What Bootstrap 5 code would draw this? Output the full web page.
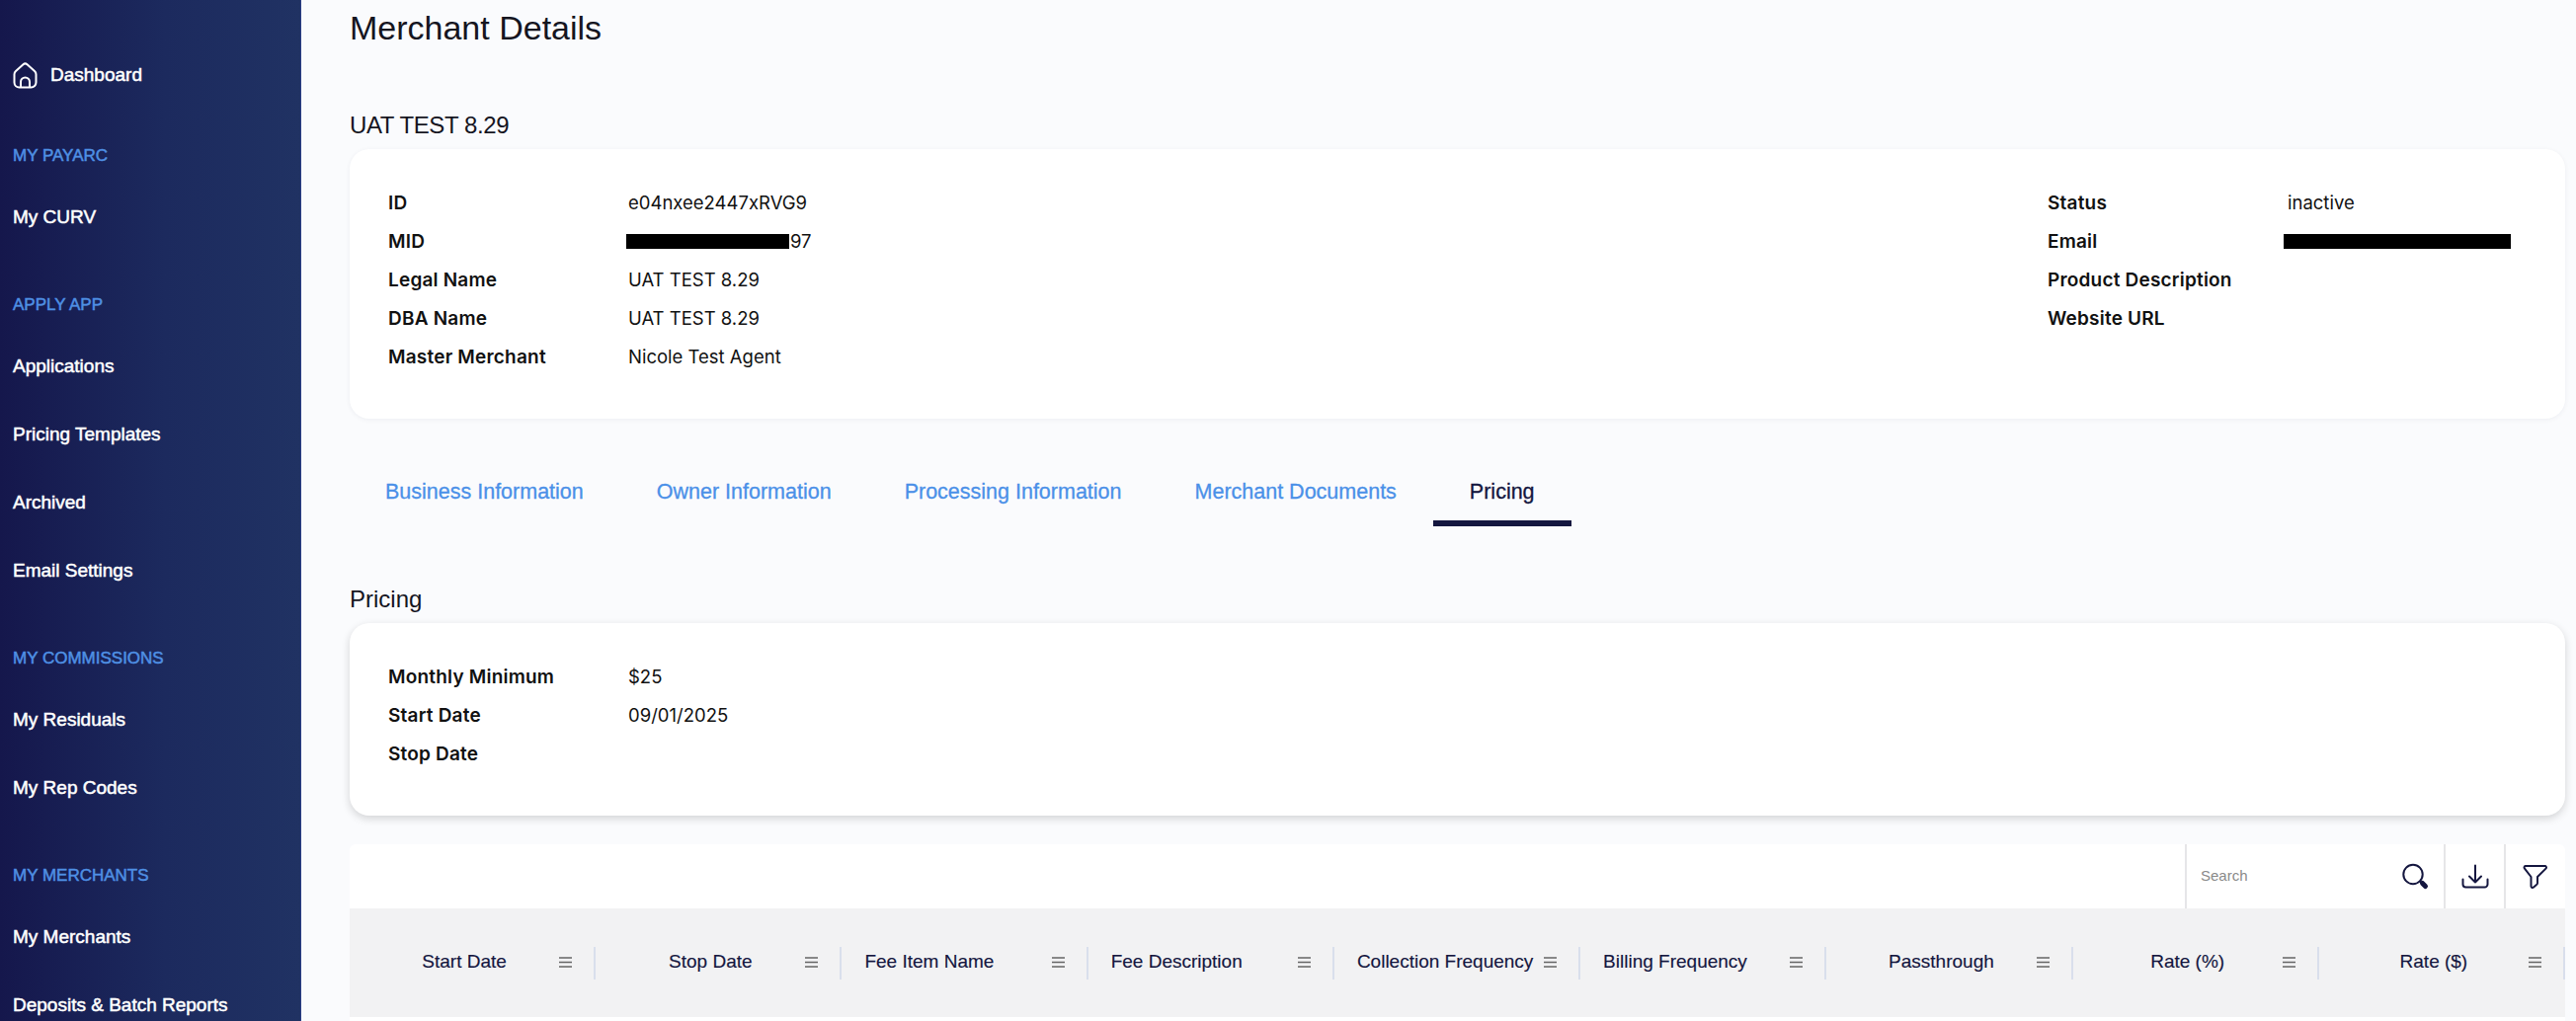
<!DOCTYPE html>
<html lang="en">
<head>
  <meta charset="UTF-8" />
  <title>Merchant Details</title>
  <link href="https://cdn.jsdelivr.net/npm/bootstrap@5.3.2/dist/css/bootstrap.min.css" rel="stylesheet" />
  <script src="https://cdn.jsdelivr.net/npm/bootstrap@5.3.2/dist/js/bootstrap.bundle.min.js" defer></script>
  <style>
    html, body { height: 1034px; overflow: hidden; }
    body { background: #fafbfd; font-family: "Liberation Sans", Arial, sans-serif; color: #14163f; }
    .page-wrap { height: 1034px; overflow: hidden; }

    /* sidebar */
    .side-bar { width: 305px; flex: none; background: linear-gradient(90deg, #15174c 0%, #1c2a5e 55%, #203263 100%); border-right: 1px solid #2b3f86; padding: 62px 13px 0; }
    .side-link { display: flex; align-items: center; gap: 13px; height: 28px; margin-bottom: 41px; color: #fff; font-size: 19px; -webkit-text-stroke: .5px currentColor; text-decoration: none; white-space: nowrap; }
    .side-head { height: 28px; line-height: 28px; margin-top: 61px; margin-bottom: 34px; color: #4f90e4; font-size: 17px; -webkit-text-stroke: .5px currentColor; white-space: nowrap; }
    .side-head.first-head { margin-top: 54px; }

    /* main column */
    .main-col { padding: 0 11px 0 49px; min-width: 0; }
    .page-title { font-size: 34px; line-height: 40px; font-weight: 400; margin: 8px 0 0; color: #15151f; }
    .sect-title { font-size: 24px; line-height: 30px; font-weight: 400; color: #15151f; }
    .sect-merchant { margin: 64px 0 9px; letter-spacing: -.4px; }
    .sect-pricing { margin: 59px 0 9px; }
    .info-card { background: #fff; border-radius: 20px; box-shadow: 0 1px 5px rgba(20, 30, 60, .06); padding: 35px 39px 43px; font-family: Inter, "Liberation Sans", sans-serif; font-size: 18.500px; color: #111; }
    .info-card.raised { box-shadow: 0 3px 8px rgba(0, 0, 0, .16); }
    .info-row { display: flex; height: 39px; line-height: 39px; }
    .info-key { width: 243px; flex: none; font-size: 19px; letter-spacing: .2px; font-weight: 600; }
    .info-side { width: 485px; }
    .black-out { display: inline-block; height: 15px; background: #000; vertical-align: -1px; }
    .mid-bar { width: 165px; margin-left: -2px; margin-right: 1px; }
    .mail-bar { width: 230px; margin-left: -4px; }

    /* tabs */
    .tab-bar { font-size: 21.500px; margin: 48px 0 0 -1px; }
    .tab-item { padding: 0 37px; height: 61px; line-height: 52px; color: #4a90e8; text-decoration: none; -webkit-text-stroke: .3px currentColor; }
    .tab-item.on { color: #14163f; border-bottom: 6px solid #14163f; }

    /* table */
    .grid-box { background: #fff; margin-top: 29px; padding-bottom: 20px; border-top-left-radius: 6px; border-top-right-radius: 6px; }
    .grid-tools { height: 65px; }
    .tool-cell { border-left: 2px solid #e6e6e8; height: 65px; }
    .search-cell { width: 262px; padding: 0 14px 0 14px; font-size: 15px; color: #8a8a8a; }
    .icon-cell { width: 61px; }
    .icon-cell.last-cell { width: 62px; }
    .grid-head { display: grid; grid-template-columns: repeat(9, minmax(0, 1fr)); align-items: center; height: 110px; background: #f2f2f3; font-size: 19px; color: #14163f; -webkit-text-stroke: .15px currentColor; }
    .grid-col { height: 33px; line-height: 30px; position: relative; white-space: nowrap; border-right: 2px solid #d9dfec; }
    .grid-col.mid { text-align: center; padding-right: 15px; }
    .grid-col.lft { padding-left: 23px; }
    .col-menu { position: absolute; right: 22px; top: 10px; width: 13px; height: 11px; }
  </style>
</head>

<body>
  <div class="page-wrap d-flex">
    <nav class="side-bar">
      <a class="side-link" href="#">
        <svg width="25" height="27" viewBox="0 0 25 27" fill="none" stroke="#fff" stroke-width="2" stroke-linejoin="round"><path d="M10.500 2.300a3 3 0 0 1 4 0L22 9a4.500 4.500 0 0 1 1.500 3.500v8a5 5 0 0 1-5 5h-12a5 5 0 0 1-5-5v-8A4.500 4.500 0 0 1 3 9Z"/><path d="M8 25.500V20a4.500 4.500 0 0 1 9 0v5.500"/></svg>
        Dashboard
      </a>
      <div class="side-head first-head">MY PAYARC</div>
      <a class="side-link" href="#">My CURV</a>
      <div class="side-head">APPLY APP</div>
      <a class="side-link" href="#">Applications</a>
      <a class="side-link" href="#">Pricing Templates</a>
      <a class="side-link" href="#">Archived</a>
      <a class="side-link" href="#">Email Settings</a>
      <div class="side-head">MY COMMISSIONS</div>
      <a class="side-link" href="#">My Residuals</a>
      <a class="side-link" href="#">My Rep Codes</a>
      <div class="side-head">MY MERCHANTS</div>
      <a class="side-link" href="#">My Merchants</a>
      <a class="side-link" href="#">Deposits &amp; Batch Reports</a>
    </nav>

    <main class="main-col flex-grow-1">
      <h1 class="page-title">Merchant Details</h1>
      <h2 class="sect-title sect-merchant">UAT TEST 8.29</h2>

      <div class="info-card d-flex justify-content-between">
        <div>
          <div class="info-row"><div class="info-key">ID</div><div>e04nxee2447xRVG9</div></div>
          <div class="info-row"><div class="info-key">MID</div><div><span class="black-out mid-bar"></span>97</div></div>
          <div class="info-row"><div class="info-key">Legal Name</div><div>UAT TEST 8.29</div></div>
          <div class="info-row"><div class="info-key">DBA Name</div><div>UAT TEST 8.29</div></div>
          <div class="info-row"><div class="info-key">Master Merchant</div><div>Nicole Test Agent</div></div>
        </div>
        <div class="info-side">
          <div class="info-row"><div class="info-key">Status</div><div>inactive</div></div>
          <div class="info-row"><div class="info-key">Email</div><div><span class="black-out mail-bar"></span></div></div>
          <div class="info-row"><div class="info-key">Product Description</div></div>
          <div class="info-row"><div class="info-key">Website URL</div></div>
        </div>
      </div>

      <div class="tab-bar d-flex">
        <a class="tab-item" href="#">Business Information</a>
        <a class="tab-item" href="#">Owner Information</a>
        <a class="tab-item" href="#">Processing Information</a>
        <a class="tab-item" href="#">Merchant Documents</a>
        <a class="tab-item on" href="#">Pricing</a>
      </div>

      <h2 class="sect-title sect-pricing">Pricing</h2>
      <div class="info-card raised">
        <div class="info-row"><div class="info-key">Monthly Minimum</div><div>$25</div></div>
        <div class="info-row"><div class="info-key">Start Date</div><div>09/01/2025</div></div>
        <div class="info-row"><div class="info-key">Stop Date</div></div>
      </div>

      <div class="grid-box">
        <div class="grid-tools d-flex justify-content-end">
          <div class="tool-cell search-cell d-flex align-items-center justify-content-between">
            <span>Search</span>
            <svg width="28" height="28" viewBox="0 0 28 28" fill="none" stroke="#14163f"><circle cx="11" cy="11.500" r="9.700" stroke-width="2"/><path d="M18 18.500l3 2.500" stroke-width="2"/><path d="M20.500 20.500l3 3" stroke-width="5" stroke-linecap="round"/></svg>
          </div>
          <div class="tool-cell icon-cell d-flex align-items-center justify-content-center">
            <svg width="28" height="26" viewBox="0 0 28 26" fill="none" stroke="#14163f" stroke-width="2" stroke-linecap="round" stroke-linejoin="round"><path d="M14 1.500v17M8 12.500l6 6 6-6"/><path d="M1.500 15.500v5a3 3 0 0 0 3 3h19a3 3 0 0 0 3-3v-5"/></svg>
          </div>
          <div class="tool-cell icon-cell last-cell d-flex align-items-center justify-content-center">
            <svg width="26" height="26" viewBox="0 0 26 26" fill="none" stroke="#14163f" stroke-width="2" stroke-linejoin="round"><path d="M3 2h19.500a1.500 1.500 0 0 1 1.200 2.400L15 13v6.300a2 2 0 0 1-1 1.700l-3.200 2.700a1.500 1.500 0 0 1-2.300-1.200V13L1.800 4.400A1.500 1.500 0 0 1 3 2Z"/></svg>
          </div>
        </div>
        <div class="grid-head">
          <div class="grid-col mid">Start Date<svg class="col-menu" viewBox="0 0 13 11" stroke="#666" stroke-width="1.500"><path d="M0 1h13M0 5.500h13M0 10h13"/></svg></div>
          <div class="grid-col mid">Stop Date<svg class="col-menu" viewBox="0 0 13 11" stroke="#666" stroke-width="1.500"><path d="M0 1h13M0 5.500h13M0 10h13"/></svg></div>
          <div class="grid-col lft">Fee Item Name<svg class="col-menu" viewBox="0 0 13 11" stroke="#666" stroke-width="1.500"><path d="M0 1h13M0 5.500h13M0 10h13"/></svg></div>
          <div class="grid-col lft">Fee Description<svg class="col-menu" viewBox="0 0 13 11" stroke="#666" stroke-width="1.500"><path d="M0 1h13M0 5.500h13M0 10h13"/></svg></div>
          <div class="grid-col lft">Collection Frequency<svg class="col-menu" viewBox="0 0 13 11" stroke="#666" stroke-width="1.500"><path d="M0 1h13M0 5.500h13M0 10h13"/></svg></div>
          <div class="grid-col lft">Billing Frequency<svg class="col-menu" viewBox="0 0 13 11" stroke="#666" stroke-width="1.500"><path d="M0 1h13M0 5.500h13M0 10h13"/></svg></div>
          <div class="grid-col mid">Passthrough<svg class="col-menu" viewBox="0 0 13 11" stroke="#666" stroke-width="1.500"><path d="M0 1h13M0 5.500h13M0 10h13"/></svg></div>
          <div class="grid-col mid">Rate (%)<svg class="col-menu" viewBox="0 0 13 11" stroke="#666" stroke-width="1.500"><path d="M0 1h13M0 5.500h13M0 10h13"/></svg></div>
          <div class="grid-col mid">Rate ($)<svg class="col-menu" viewBox="0 0 13 11" stroke="#666" stroke-width="1.500"><path d="M0 1h13M0 5.500h13M0 10h13"/></svg></div>
        </div>
      </div>
    </main>
  </div>
</body>
</html>
